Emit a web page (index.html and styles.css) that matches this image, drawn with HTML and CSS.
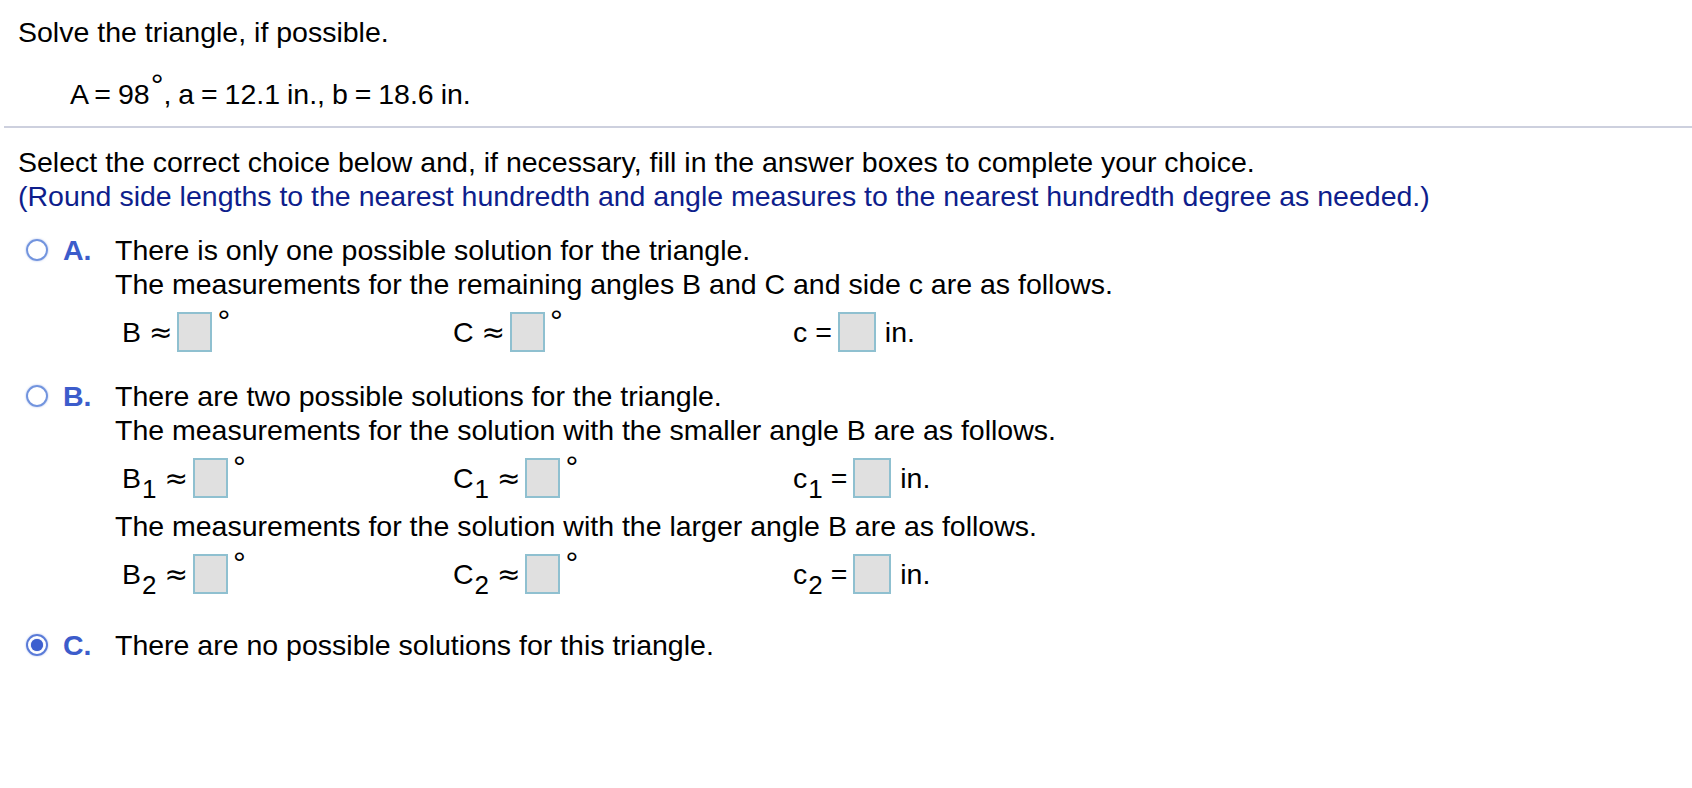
FILE: index.html
```html
<!DOCTYPE html>
<html lang="en">
<head>
  <meta charset="UTF-8">
  <title>Solve the triangle</title>
  <link rel="stylesheet" href="styles.css">
</head>
<body>
  <div class="question">
    <p class="prompt">Solve the triangle, if possible.</p>
    <p class="given">A = 98<span class="given-deg">°</span>, a = 12.1 in., b = 18.6 in.</p>
  </div>

  <div class="divider"></div>

  <div class="answer">
    <p class="line">Select the correct choice below and, if necessary, fill in the answer boxes to complete your choice.</p>
    <p class="line hint">(Round side lengths to the nearest hundredth and angle measures to the nearest hundredth degree as needed.)</p>

    <div class="choices">
      <div class="choice">
        <span class="radio"></span>
        <span class="letter">A.</span>
        <div class="choice-body">
          <div class="line">There is only one possible solution for the triangle.</div>
          <div class="line">The measurements for the remaining angles B and C and side c are as follows.</div>
          <div class="fill-row">
            <div class="cell"><span class="label">B <span class="approx">≈</span></span><span class="box"></span><span class="deg">°</span></div>
            <div class="cell"><span class="label">C <span class="approx">≈</span></span><span class="box"></span><span class="deg">°</span></div>
            <div class="cell side"><span class="label">c =</span><span class="box"></span><span class="unit">in.</span></div>
          </div>
        </div>
      </div>

      <div class="choice">
        <span class="radio"></span>
        <span class="letter">B.</span>
        <div class="choice-body">
          <div class="line">There are two possible solutions for the triangle.</div>
          <div class="line">The measurements for the solution with the smaller angle B are as follows.</div>
          <div class="fill-row">
            <div class="cell"><span class="label">B<sub>1</sub> <span class="approx">≈</span></span><span class="box"></span><span class="deg">°</span></div>
            <div class="cell"><span class="label">C<sub>1</sub> <span class="approx">≈</span></span><span class="box"></span><span class="deg">°</span></div>
            <div class="cell side"><span class="label">c<sub>1</sub> =</span><span class="box"></span><span class="unit">in.</span></div>
          </div>
          <div class="line">The measurements for the solution with the larger angle B are as follows.</div>
          <div class="fill-row">
            <div class="cell"><span class="label">B<sub>2</sub> <span class="approx">≈</span></span><span class="box"></span><span class="deg">°</span></div>
            <div class="cell"><span class="label">C<sub>2</sub> <span class="approx">≈</span></span><span class="box"></span><span class="deg">°</span></div>
            <div class="cell side"><span class="label">c<sub>2</sub> =</span><span class="box"></span><span class="unit">in.</span></div>
          </div>
        </div>
      </div>

      <div class="choice last">
        <span class="radio checked"></span>
        <span class="letter">C.</span>
        <div class="choice-body">
          <div class="line">There are no possible solutions for this triangle.</div>
        </div>
      </div>
    </div>
  </div>
</body>
</html>
```

FILE: styles.css
```css
body {
  margin: 0;
  font-family: "Liberation Sans", Arial, sans-serif;
  font-size: 28.5px;
  color: #000;
  background-color: #fff;
}
p {
  margin: 0;
}
.question {
  padding: 15px 0 0 18px;
}
.prompt {
  line-height: 34px;
}
.given {
  margin-top: 28px;
  padding-left: 52px;
  line-height: 34px;
  word-spacing: -1px;
}
.given-deg {
  position: relative;
  top: -8px;
  margin-left: 1px;
  font-size: 32px;
  line-height: 0;
}
.divider {
  height: 2px;
  margin: 15px 0 0 4px;
  background-color: #cdd0de;
}
.answer {
  padding: 17px 0 0 18px;
}
.line {
  line-height: 34px;
  white-space: nowrap;
}
.hint {
  color: #0e1e8c;
}
.choices {
  margin-top: 20px;
}
.choice {
  display: flex;
  align-items: flex-start;
}
.choice + .choice {
  margin-top: 27px;
}
.choice.last {
  margin-top: 34px;
}
.radio {
  box-sizing: border-box;
  width: 22px;
  height: 22px;
  margin: 6px 0 0 8px;
  border: 2px solid #7294de;
  border-radius: 50%;
  box-shadow: 0 0 2px rgba(90, 125, 215, 0.55);
  flex-shrink: 0;
  position: relative;
}
.radio.checked {
  border-color: #5a7bd8;
}
.radio.checked::after {
  content: "";
  position: absolute;
  left: 3px;
  top: 3px;
  width: 12px;
  height: 12px;
  border-radius: 50%;
  background-color: #3d5fcf;
  box-shadow: 0 0 1px #3d5fcf;
}
.letter {
  width: 52px;
  margin-left: 15px;
  line-height: 34px;
  font-weight: bold;
  color: #3c5ccb;
}
.fill-row {
  display: grid;
  grid-template-columns: 331px 340px auto;
  height: 40px;
  margin: 11px 0 0 7px;
}
.fill-row + .line {
  margin-top: 11px;
}
.cell {
  display: flex;
  align-items: center;
}
.label {
  white-space: pre;
  line-height: 34px;
}
.label sub {
  font-size: 26px;
  line-height: 0;
  vertical-align: -10px;
  margin-left: 1px;
}
.approx {
  font-family: "DejaVu Sans", sans-serif;
  font-size: 28px;
}
.box {
  box-sizing: border-box;
  width: 35px;
  height: 40px;
  margin-left: 5px;
  border: 2px solid #8fc0d0;
  background-color: #e0e0e0;
}
.side .box {
  width: 38px;
  margin-left: 6px;
}
.deg {
  align-self: flex-start;
  margin-left: 5px;
  font-size: 32px;
  line-height: 24px;
  margin-top: -3px;
}
.unit {
  margin-left: 9px;
}
```
